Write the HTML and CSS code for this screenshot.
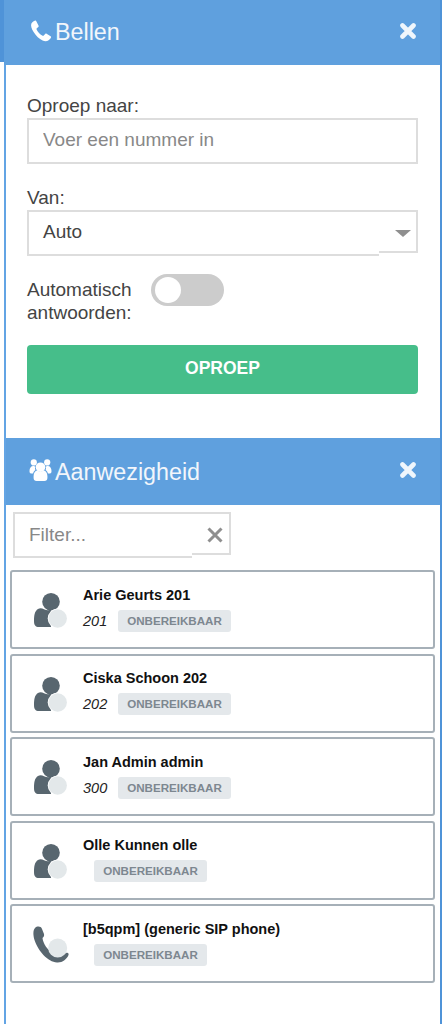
FILE: index.html
```html
<!DOCTYPE html>
<html lang="nl">
<head>
<meta charset="utf-8">
<title>Bellen</title>
<link rel="stylesheet" href="styles.css">
</head>
<body>
<div class="strip"></div>
<main class="panel">
  <header class="bar bar-call">
    <svg class="bar-icon" viewBox="0 0 24 24"><path d="M6.200 1.600c-1.300.3-3.400 1.800-3.900 3.200-.7 2 .3 5.200 2.300 8.300 2.500 3.900 5.700 7 9 8.500 2.300 1 4.400.8 6-.3 1.200-.8 2.300-2 2.500-3 .1-.5-.1-.8-.5-1.100l-4-2.500c-.5-.3-1-.2-1.400.2l-1.500 1.700c-.3.3-.7.4-1.100.2-2.300-1.200-4.700-3.700-6-6.400-.2-.4-.1-.8.2-1.100l1.500-1.300c.4-.4.5-.8.3-1.300L7.300 2.200c-.2-.5-.6-.7-1.100-.6z" fill="#fff"/></svg>
    <h2 class="bar-title">Bellen</h2>
    <svg class="bar-close" viewBox="0 0 16 16"><path d="M2.500 2.500l11 11M13.500 2.500l-11 11" stroke="#fff" stroke-width="4.600" stroke-linecap="round" fill="none" opacity=".9"/></svg>
  </header>
  <form class="call-form">
    <label class="field-label" for="to">Oproep naar:</label>
    <input class="text-input" id="to" type="text" placeholder="Voer een nummer in">
    <label class="field-label label-van">Van:</label>
    <div class="select-box">
      <span>Auto</span>
      <span class="select-arrow"></span>
    </div>
    <div class="auto-row">
      <span class="auto-label">Automatisch antwoorden:</span>
      <span class="toggle"><span class="knob"></span></span>
    </div>
    <button class="call-btn" type="button">OPROEP</button>
  </form>
  <header class="bar bar-presence">
    <svg class="bar-icon" viewBox="0 0 24 24" fill="#fff"><circle cx="11.500" cy="9.200" r="4.800"/><circle cx="4.800" cy="4.400" r="3.100"/><circle cx="18.200" cy="4.400" r="3.100"/><path d="M.5 13c0-3 1.400-5 3.800-5 1 0 1.500.3 2 .6-.4 1-.4 2.200.1 3.400-1.300.8-2 2-2.300 3.400H2c-1 0-1.500-.6-1.500-2.400zM22.500 13c0-3-1.400-5-3.800-5-1 0-1.500.3-2 .6.4 1 .4 2.200-.1 3.400 1.300.8 2 2 2.300 3.400H21c1 0 1.500-.6 1.500-2.400zM4.600 18c0-3.500 1.900-5.500 3.900-5.500.9.7 1.900 1.100 3 1.100s2.100-.4 3-1.100c2 0 3.900 2 3.900 5.500v2c0 1.800-1.200 3-3 3H7.600c-1.800 0-3-1.200-3-3z"/></svg>
    <h2 class="bar-title bar-title-low">Aanwezigheid</h2>
    <svg class="bar-close" viewBox="0 0 16 16"><path d="M2.500 2.500l11 11M13.500 2.500l-11 11" stroke="#fff" stroke-width="4.600" stroke-linecap="round" fill="none" opacity=".9"/></svg>
  </header>
  <section class="presence">
    <div class="filter-box">
      <input class="filter-input" type="text" placeholder="Filter...">
      <svg class="filter-clear" viewBox="0 0 16 16"><path d="M1.500 1.500l13 13M14.500 1.500l-13 13" stroke="#8f8f8f" stroke-width="3" fill="none"/></svg>
    </div>
    <ul class="contacts">
      <li class="contact">
        <span class="avatar"><svg viewBox="0 0 36 36"><circle cx="18" cy="9.700" r="8.800" fill="#58666f"/><path d="M1 29c0-6 .8-10 4-12 2-1.200 4-.8 6 .2 2.500 1.200 5 1.200 7 .4L18 35H6c-3.500 0-5-2-5-6z" fill="#58666f"/><circle cx="24.700" cy="26.500" r="10" fill="#fff"/><circle cx="24.700" cy="26.500" r="9.200" fill="#e3e8ea"/></svg></span>
        <div class="info"><div class="name">Arie Geurts 201</div><div class="meta"><em class="ext">201</em><span class="badge">ONBEREIKBAAR</span></div></div>
      </li>
      <li class="contact">
        <span class="avatar"><svg viewBox="0 0 36 36"><circle cx="18" cy="9.700" r="8.800" fill="#58666f"/><path d="M1 29c0-6 .8-10 4-12 2-1.200 4-.8 6 .2 2.500 1.200 5 1.200 7 .4L18 35H6c-3.500 0-5-2-5-6z" fill="#58666f"/><circle cx="24.700" cy="26.500" r="10" fill="#fff"/><circle cx="24.700" cy="26.500" r="9.200" fill="#e3e8ea"/></svg></span>
        <div class="info"><div class="name">Ciska Schoon 202</div><div class="meta"><em class="ext">202</em><span class="badge">ONBEREIKBAAR</span></div></div>
      </li>
      <li class="contact">
        <span class="avatar"><svg viewBox="0 0 36 36"><circle cx="18" cy="9.700" r="8.800" fill="#58666f"/><path d="M1 29c0-6 .8-10 4-12 2-1.200 4-.8 6 .2 2.500 1.200 5 1.200 7 .4L18 35H6c-3.500 0-5-2-5-6z" fill="#58666f"/><circle cx="24.700" cy="26.500" r="10" fill="#fff"/><circle cx="24.700" cy="26.500" r="9.200" fill="#e3e8ea"/></svg></span>
        <div class="info"><div class="name">Jan Admin admin</div><div class="meta"><em class="ext">300</em><span class="badge">ONBEREIKBAAR</span></div></div>
      </li>
      <li class="contact">
        <span class="avatar"><svg viewBox="0 0 36 36"><circle cx="18" cy="9.700" r="8.800" fill="#58666f"/><path d="M1 29c0-6 .8-10 4-12 2-1.200 4-.8 6 .2 2.500 1.200 5 1.200 7 .4L18 35H6c-3.500 0-5-2-5-6z" fill="#58666f"/><circle cx="24.700" cy="26.500" r="10" fill="#fff"/><circle cx="24.700" cy="26.500" r="9.200" fill="#e3e8ea"/></svg></span>
        <div class="info"><div class="name">Olle Kunnen olle</div><div class="meta meta-noext"><span class="badge">ONBEREIKBAAR</span></div></div>
      </li>
      <li class="contact">
        <span class="avatar"><svg viewBox="0 0 36 36"><path d="M2 2C4 0 8 0 9 3l2 5c.5 2-.5 3-1.500 4C10 17 14 24 21 28c5 2.500 9 1 12-1 2-1 3 .5 2.500 2-1.500 4-6.500 8-11.500 7.500C15 36 5 25 1.500 14 0 9 0 4 2 2z" fill="#58666f"/><circle cx="24.700" cy="22" r="9.500" fill="#e3e8ea"/></svg></span>
        <div class="info"><div class="name">[b5qpm] (generic SIP phone)</div><div class="meta meta-noext"><span class="badge">ONBEREIKBAAR</span></div></div>
      </li>
    </ul>
  </section>
</main>
</body>
</html>
```

FILE: styles.css
```css
* { box-sizing: border-box; }
html, body { margin: 0; padding: 0; background: #fff; }
body {
  height: 1024px;
  overflow: hidden;
  font-family: "Liberation Sans", Arial, sans-serif;
  color: #444;
}
.strip {
  position: absolute;
  left: 0;
  top: 0;
  width: 4px;
  height: 62px;
  background: #4f93d8;
}
.panel {
  margin-left: 4px;
  width: 438px;
  height: 1024px;
  border-left: 2px solid #63a4e4;
  border-right: 2px solid #4f93d8;
}
.bar {
  display: flex;
  align-items: center;
  background: #5fa0de;
  color: #f2f6fb;
  padding: 0 24px 0 23px;
}
.bar-call { height: 65px; margin-left: -2px; padding-left: 25px; }
.bar-presence { height: 67px; }
.bar-icon { width: 24px; height: 24px; flex: none; margin-top: -4px; }
.bar-title {
  margin: 0 0 0 2px;
  font-size: 23.300px;
  font-weight: 400;
  flex: 1;
}
.bar-title-low { padding-top: 2px; }
.bar-close { width: 16px; height: 16px; flex: none; margin-top: -4px; }
.call-form {
  padding: 29px 21px 0;
  height: 373px;
}
.field-label {
  display: block;
  font-size: 19px;
  line-height: 23px;
  padding-bottom: 1px;
}
.text-input {
  display: block;
  width: 391px;
  height: 46px;
  padding: 0 14px 2px;
  border: 2px solid #ddd;
  font: 19px "Liberation Sans", Arial, sans-serif;
  color: #444;
  background: #fff;
  outline: none;
}
.text-input::placeholder, .filter-input::placeholder { color: #888; opacity: 1; }
.label-van { margin-top: 22px; }
.select-box {
  position: relative;
  display: flex;
  align-items: center;
  width: 391px;
  height: 46px;
  padding: 0 14px 2px;
  border: 2px solid #ddd;
  font-size: 19px;
}
.select-box::after, .filter-box::after {
  content: "";
  position: absolute;
  right: -2px;
  bottom: -2px;
  width: 39px;
  height: 3px;
  border-top: 2px solid #ddd;
  background: #fff;
}
.select-arrow {
  position: absolute;
  right: 5px;
  top: 18px;
  border-left: 8px solid transparent;
  border-right: 8px solid transparent;
  border-top: 7px solid #8f8f8f;
}
.auto-row {
  display: flex;
  align-items: flex-start;
  margin-top: 17px;
  height: 50px;
}
.auto-label {
  width: 124px;
  padding-top: 5px;
  font-size: 19px;
  line-height: 23px;
}
.toggle {
  display: block;
  width: 73px;
  height: 32px;
  margin-top: 1px;
  border-radius: 16px;
  background: #ccc;
  padding: 3px 4px;
}
.knob {
  display: block;
  width: 26px;
  height: 26px;
  border-radius: 50%;
  background: #fff;
}
.call-btn {
  display: block;
  width: 391px;
  height: 49px;
  margin-top: 22px;
  padding-bottom: 3px;
  border: 0;
  border-radius: 4px;
  background: #46be8a;
  color: #fff;
  font: 700 17.500px "Liberation Sans", Arial, sans-serif;
}
.presence { padding: 7px 5px 0 4px; }
.filter-box {
  position: relative;
  width: 218px;
  height: 46px;
  margin-left: 3px;
  border: 2px solid #ddd;
}
.filter-input {
  width: 100%;
  height: 100%;
  border: 0;
  padding: 0 14px;
  font: 19px "Liberation Sans", Arial, sans-serif;
  outline: none;
  background: transparent;
}
.filter-clear {
  position: absolute;
  right: 6px;
  top: 13px;
  width: 16px;
  height: 16px;
}
.contacts {
  list-style: none;
  margin: 12px 0 0;
  padding: 0;
  display: flex;
  flex-direction: column;
  gap: 4.500px;
}
.contact {
  display: flex;
  height: 79px;
  width: 425px;
  border: 2px solid #a6b0b8;
  border-radius: 3px;
  padding: 0 0 0 21px;
}
.avatar { width: 36px; height: 36px; margin-top: 20px; flex: none; }
.avatar svg { display: block; width: 36px; height: 36px; overflow: visible; }
.info { margin-left: 14px; padding-top: 13.500px; }
.name {
  font-size: 14.500px;
  font-weight: 700;
  line-height: 18px;
  color: #111;
}
.meta {
  display: flex;
  align-items: center;
  margin-top: 6px;
}
.meta-noext { padding-left: 11px; }
.ext { font-size: 14.500px; color: #222; width: 35px; }
.badge {
  display: block;
  width: 113px;
  height: 22px;
  line-height: 22px;
  text-align: center;
  border-radius: 3px;
  background: #e4e8eb;
  color: #7d8790;
  font-size: 11.600px;
  font-weight: 700;
}
```
